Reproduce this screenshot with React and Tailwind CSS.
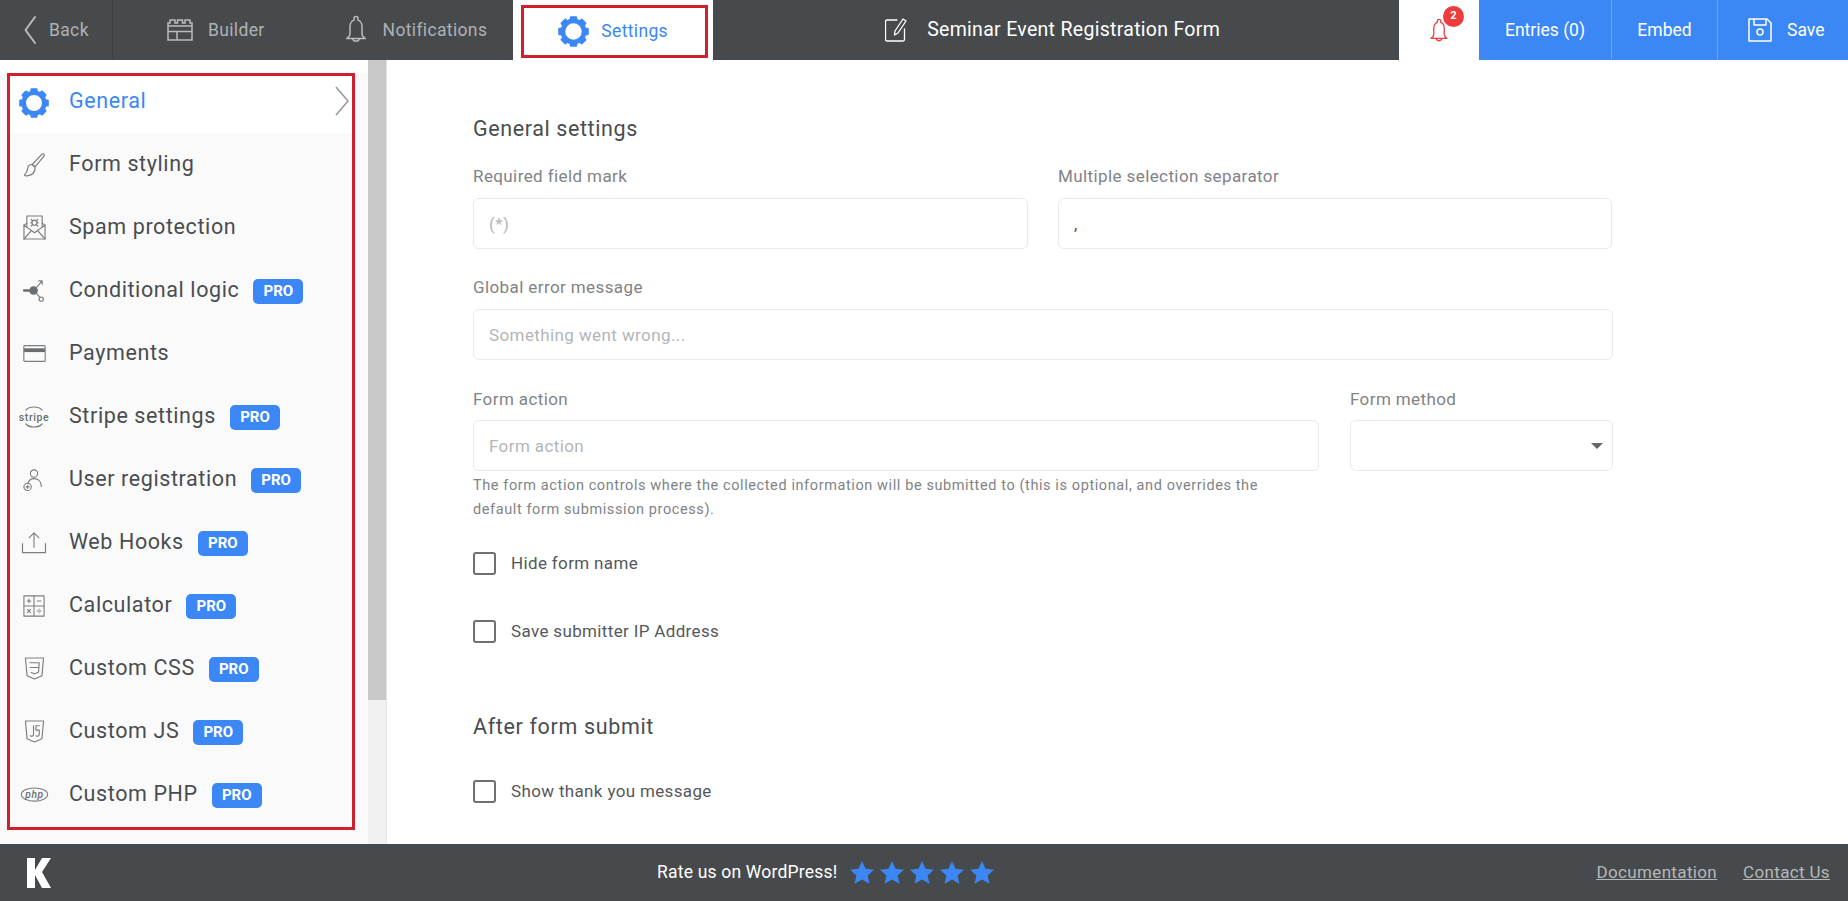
import React from "react";

const font = { fontFamily: "Roboto, sans-serif" };

function Gear({ size = 30, className = "" }) {
  const teeth = [0, 45, 90, 135, 180, 225, 270, 315];
  return (
    <svg width={size} height={size} viewBox="0 0 30 30" className={className} fill="#3b87f5">
      {teeth.map((a) => (
        <rect key={a} x="11.400" y="0.200" width="7.200" height="6.500" rx="1.200" transform={`rotate(${a} 15 15)`} />
      ))}
      <circle cx="15" cy="15" r="10.300" fill="none" stroke="#3b87f5" strokeWidth="4.600" />
    </svg>
  );
}

function Bell({ color = "#b9bcbf", w = 22, h = 30 }) {
  return (
    <svg width={w} height={h} viewBox="0 0 22 30" fill="none" stroke={color} strokeWidth="1.500" strokeLinejoin="round">
      <path d="M11 1.500a2 2 0 0 1 2 2v1.600c2.600 1 4 3.400 4 6.400v7c0 2.200 1 3.600 3.200 5H1.800C4 22.100 5 20.700 5 18.500v-7c0-3 1.400-5.400 4-6.400V3.500a2 2 0 0 1 2-2z" />
      <path d="M7.600 23.600a3.500 3.500 0 0 0 6.800 0" />
    </svg>
  );
}

const ic = { fill: "none", stroke: "#7b7e80", strokeWidth: 1.2, strokeLinejoin: "round", strokeLinecap: "round" };

const icons = {
  brush: (
    <svg width="23" height="24" viewBox="0 0 23 24" {...ic}>
      <path d="M19 1.200c1.300-1 3 .6 2 2L12 13.800l-2.800-2.300z" />
      <path d="M9 11.500c-2.500 0-4 1.500-4.300 3.800-.3 2.500-1.200 4.500-3.200 6.500 0 1 1 1.200 2.500 1 4.500-.5 8.500-3 8-8.800z" />
    </svg>
  ),
  spam: (
    <svg width="23" height="25" viewBox="0 0 24 26" {...ic}>
      <path d="M1 10.500V25h22V10.500L12 18.500z" />
      <path d="M1 25l8-9M23 25l-8-9" />
      <path d="M4 12.500V1h16v11.500" />
      <path d="M1 10.500l3-2M23 10.500l-3-2" />
      <circle cx="12" cy="8" r="2.700" />
      <path d="M8.500 4.500l1.700 1.700M15.500 4.500l-1.700 1.700M8.500 11.500l1.700-1.700M15.500 11.500l-1.700-1.700M8 8h1.300M16 8h-1.300" />
    </svg>
  ),
  logic: (
    <svg width="23" height="25" viewBox="0 0 24 26" {...ic}>
      <path d="M1 13h8" strokeWidth="2.500" stroke="#6b6e70" />
      <circle cx="11" cy="13" r="4.500" fill="#6b6e70" stroke="none" />
      <path d="M14 10l6-7M20 3h-3.500M20 3v3.500M14 16l3.500 4" />
      <circle cx="19" cy="22" r="2.200" />
    </svg>
  ),
  card: (
    <svg width="23" height="17" viewBox="0 0 24 18" fill="none">
      <rect x="0.700" y="0.700" width="22.600" height="16.600" stroke="#7b7e80" strokeWidth="1.200" rx="1" />
      <rect x="1" y="3.500" width="22" height="4" fill="#6b6e70" />
    </svg>
  ),
  stripe: (
    <svg width="32" height="24" viewBox="0 0 32 24" {...ic}>
      <path d="M8 5c3.500-4 12.500-4 16 0M8 19c3.500 4 12.500 4 16 0" />
      <text x="16" y="15.500" textAnchor="middle" fill="#6b6e70" stroke="none" fontSize="10.500" fontWeight="500" fontFamily="Roboto, sans-serif">stripe</text>
    </svg>
  ),
  user: (
    <svg width="22" height="24" viewBox="0 0 24 26" {...ic}>
      <circle cx="12" cy="6" r="4" />
      <path d="M5.500 17c.5-3.500 3-5.500 6.500-5.500 4.500 0 8 3 8 8.500" />
      <circle cx="5" cy="20.500" r="4" />
      <path d="M3.300 20.500h3.400M5 18.800v3.400" />
    </svg>
  ),
  upload: (
    <svg width="26" height="23" viewBox="0 0 26 24" {...ic}>
      <path d="M13 17V2M8 7l5-5 5 5" />
      <path d="M1 13v9.500h24V13" />
    </svg>
  ),
  calc: (
    <svg width="22" height="22" viewBox="0 0 24 24" {...ic}>
      <rect x="1" y="1" width="22" height="22" />
      <path d="M12 1v22M1 12h22M4.500 6.500h4M6.500 4.500v4M15.500 6.500h4M4.800 15.800l3.400 3.400M8.200 15.800l-3.400 3.400M15.500 17.500h4M17.500 15.300v.2M17.500 19.500v.2" />
    </svg>
  ),
  css: (
    <svg width="21" height="23" viewBox="0 0 22 24" {...ic}>
      <path d="M1.500 1h19l-1.700 18.500L11 23l-7.800-3.500z" />
      <path d="M6 6h10l-.8 10L11 17.500 7.500 16.200M6.500 11h9" />
    </svg>
  ),
  js: (
    <svg width="21" height="23" viewBox="0 0 22 24" {...ic}>
      <path d="M1.500 1h19l-1.700 18.500L11 23l-7.800-3.500z" />
      <path d="M10 6v9c0 2-2 2.500-3.500 1.500M16 6h-3.500v4.500H16V15c0 2-2 2.500-3.500 1.500" />
    </svg>
  ),
  php: (
    <svg width="29" height="15" viewBox="0 0 30 16" {...ic}>
      <ellipse cx="15" cy="8" rx="14" ry="7" />
      <text x="15" y="11.500" textAnchor="middle" fill="#6b6e70" stroke="none" fontSize="11" fontStyle="italic" fontWeight="500" fontFamily="Roboto, sans-serif">php</text>
    </svg>
  ),
};

const rows = [
  ["brush", "Form styling", false],
  ["spam", "Spam protection", false],
  ["logic", "Conditional logic", true],
  ["card", "Payments", false],
  ["stripe", "Stripe settings", true],
  ["user", "User registration", true],
  ["upload", "Web Hooks", true],
  ["calc", "Calculator", true],
  ["css", "Custom CSS", true],
  ["js", "Custom JS", true],
  ["php", "Custom PHP", true],
];

function Pro() {
  return (
    <span className="ml-[14px] mt-[2px] flex h-[25px] w-[50px] items-center justify-center rounded-[5px] bg-[#3b87f5] text-[15px] font-bold tracking-normal text-white">
      PRO
    </span>
  );
}

function Label({ children }) {
  return <label className="block h-[24px] text-[17px] leading-[24px] tracking-[0.4px] text-[#808386]">{children}</label>;
}

function Field({ placeholder, value, className = "mt-[10px]" }) {
  return (
    <input
      readOnly
      placeholder={placeholder}
      value={value}
      className={`block h-[51px] w-full rounded-[6px] border border-[#e8eaeb] bg-white px-[15px] text-[17px] tracking-[0.4px] text-[#4a4d50] placeholder:text-[#b3b5b7] ${className}`}
    />
  );
}

function Check({ label, className = "" }) {
  return (
    <div className={`flex h-[23px] items-center ${className}`}>
      <span className="block h-[23px] w-[23px] rounded-[3px] border-2 border-[#6e7173] bg-white" />
      <span className="ml-[15px] text-[17px] tracking-[0.35px] text-[#55585b]">{label}</span>
    </div>
  );
}

function Star() {
  return (
    <svg width="24" height="23" viewBox="0 0 24 23" fill="#3b87f5">
      <path d="M12 0l3.500 7.800 8.500.9-6.400 5.700 1.800 8.400L12 18.500l-7.400 4.300 1.800-8.400L0 8.700l8.500-.9z" />
    </svg>
  );
}

export default function App() {
  return (
    <div className="flex h-[901px] w-[1848px] flex-col overflow-hidden bg-white" style={font}>
      <header className="flex h-[60px] shrink-0 bg-[#474a4d] text-[17.500px] tracking-[0.35px] text-[#aeb1b4]">
        <div className="flex w-[113px] items-center border-r border-[#3f4244] pl-[24px]">
          <svg width="12" height="30" viewBox="0 0 12 30" fill="none" stroke="#b9bcbf" strokeWidth="2" strokeLinecap="round" strokeLinejoin="round">
            <path d="M11 2L1.500 15 11 28" />
          </svg>
          <span className="ml-[13px]">Back</span>
        </div>
        <div className="ml-[54px] flex items-center">
          <svg width="26" height="22" viewBox="0 0 26 22" fill="none" stroke="#b9bcbf" strokeWidth="1.500">
            <path d="M1 21V4h2V1h5v3h2.500V1h5v3H18V1h5v3h2v17zM1 12.500h24M10 12.500V21M1 7h24" />
          </svg>
          <span className="ml-[15px]">Builder</span>
        </div>
        <div className="ml-[80px] flex items-center">
          <Bell />
          <span className="ml-[16px]">Notifications</span>
        </div>
        <div className="ml-[26px] h-[60px] w-[200px] bg-white pb-[2px] pl-[8px] pr-[5px] pt-[5px]">
          <div className="flex h-[53px] items-center border-[3px] border-[#d21f2f] pl-[34px] text-[#3b87f5]">
            <Gear size={31} />
            <span className="ml-[12px]">Settings</span>
          </div>
        </div>
        <div className="flex flex-1 items-center justify-center pr-[7px]">
          <svg width="22" height="24" viewBox="0 0 22 24" fill="none" stroke="#ffffff" strokeWidth="1.300" strokeLinejoin="round" strokeLinecap="round">
            <path d="M12 2H2a1.500 1.500 0 0 0-1.500 1.500v18A1.500 1.500 0 0 0 2 23h16a1.500 1.500 0 0 0 1.500-1.500V11" />
            <path d="M18 1l3 2-8 12-3.500 2 .5-4z" />
          </svg>
          <span className="ml-[20px] text-[19.500px] tracking-[0.3px] text-white">Seminar Event Registration Form</span>
        </div>
        <div className="relative flex w-[80px] items-center bg-white pl-[30px] pt-[2px]">
          <Bell color="#ee4040" w={20} h={26} />
          <span className="absolute left-[44px] top-[6px] flex h-[21px] w-[21px] items-center justify-center rounded-full bg-[#ee3b3b] text-[11px] font-bold text-white">
            2
          </span>
        </div>
        <div className="flex w-[369px] bg-[#3b87f5] tracking-normal text-white">
          <div className="flex w-[133px] items-center justify-center border-r border-[#6aa5f8]">Entries (0)</div>
          <div className="flex w-[106px] items-center justify-center border-r border-[#6aa5f8]">Embed</div>
          <div className="flex flex-1 items-center pl-[30px]">
            <svg width="24" height="24" viewBox="0 0 24 24" fill="none" stroke="#ffffff" strokeWidth="1.500" strokeLinejoin="round">
              <path d="M1 1h18l4 4v18H1zM6 1v6h12V1" />
              <circle cx="12" cy="14" r="3" />
            </svg>
            <span className="ml-[15px]">Save</span>
          </div>
        </div>
      </header>

      <div className="flex min-h-0 flex-1">
        <aside className="h-full w-[368px] shrink-0 bg-[#fafafa]">
          <div className="h-[13px] bg-white" />
          <div className="ml-[7px] h-[757px] w-[348px] border-[3px] border-[#d21f2f] text-[21.500px] tracking-[0.6px] text-[#4a4d50]">
            <div className="relative flex h-[57px] items-center bg-white pb-[7px] pl-[9px] text-[#3b87f5]">
              <Gear size={30} className="mt-[3px]" />
              <span className="ml-[20px]">General</span>
              <svg className="absolute right-[2px] top-[9px]" width="16" height="32" viewBox="0 0 16 32" fill="none" stroke="#9a9c9e" strokeWidth="1.600">
                <path d="M2 2l12 14L2 30" />
              </svg>
            </div>
            {rows.map(([icon, name, pro]) => (
              <div key={name} className="flex h-[63px] items-center">
                <span className="flex w-[59px] justify-center pr-[11px]">{icons[icon]}</span>
                <span>{name}</span>
                {pro && <Pro />}
              </div>
            ))}
          </div>
        </aside>
        <div className="h-full w-[19px] shrink-0 border-r border-[#e4e4e4] bg-[#f1f1f1]">
          <div className="h-[640px] bg-[#c8c8c8]" />
        </div>
        <main className="min-w-0 flex-1 overflow-hidden pl-[86px] pt-[54px]">
          <div className="w-[1140px]">
            <h2 className="h-[30px] text-[21.500px] font-normal leading-[30px] tracking-[0.6px] text-[#4a4d50]">General settings</h2>
            <div className="mt-[20px] grid grid-cols-[555px_554px] gap-x-[30px]">
              <div>
                <Label>Required field mark</Label>
                <Field placeholder="(*)" />
              </div>
              <div>
                <Label>Multiple selection separator</Label>
                <Field value="," />
              </div>
            </div>
            <div className="mt-[26px]">
              <Label>Global error message</Label>
              <Field placeholder="Something went wrong..." />
            </div>
            <div className="mt-[27px] grid grid-cols-[846px_263px] gap-x-[31px]">
              <div>
                <Label>Form action</Label>
                <Field placeholder="Form action" className="mt-[9px]" />
                <p className="mt-[3px] text-[14.500px] leading-[24px] tracking-[0.6px] text-[#808386]">
                  The form action controls where the collected information will be submitted to (this is optional, and overrides the
                  <br />
                  default form submission process).
                </p>
              </div>
              <div>
                <Label>Form method</Label>
                <div className="relative mt-[9px] h-[51px] rounded-[6px] border border-[#e8eaeb] bg-white">
                  <span className="absolute right-[9px] top-[22px] h-0 w-0 border-x-[6px] border-t-[6px] border-x-transparent border-t-[#666]" />
                </div>
              </div>
            </div>
            <Check label="Hide form name" className="mt-[30px]" />
            <Check label="Save submitter IP Address" className="mt-[45px]" />
            <h2 className="mt-[69px] h-[30px] text-[21.500px] font-normal leading-[30px] tracking-[0.65px] text-[#4a4d50]">After form submit</h2>
            <Check label="Show thank you message" className="mt-[38px]" />
          </div>
        </main>
      </div>

      <footer className="relative flex h-[57px] shrink-0 items-center bg-[#474a4d]">
        <svg className="ml-[27px]" width="24" height="30" viewBox="0 0 24 30" fill="#ffffff">
          <path d="M0 0h8v12L15 0h9l-9 14 9 16h-9L8 17v13H0z" />
        </svg>
        <div className="ml-[606px] flex items-center">
          <span className="text-[17.500px] tracking-[0.2px] text-white">Rate us on WordPress!</span>
          <div className="ml-[13px] flex gap-[6px]">
            <Star />
            <Star />
            <Star />
            <Star />
            <Star />
          </div>
        </div>
        <div className="ml-auto flex gap-[26px] pr-[18px] text-[17px] tracking-[0.35px] text-[#b4b7b9] underline">
          <a>Documentation</a>
          <a>Contact Us</a>
        </div>
      </footer>
    </div>
  );
}
